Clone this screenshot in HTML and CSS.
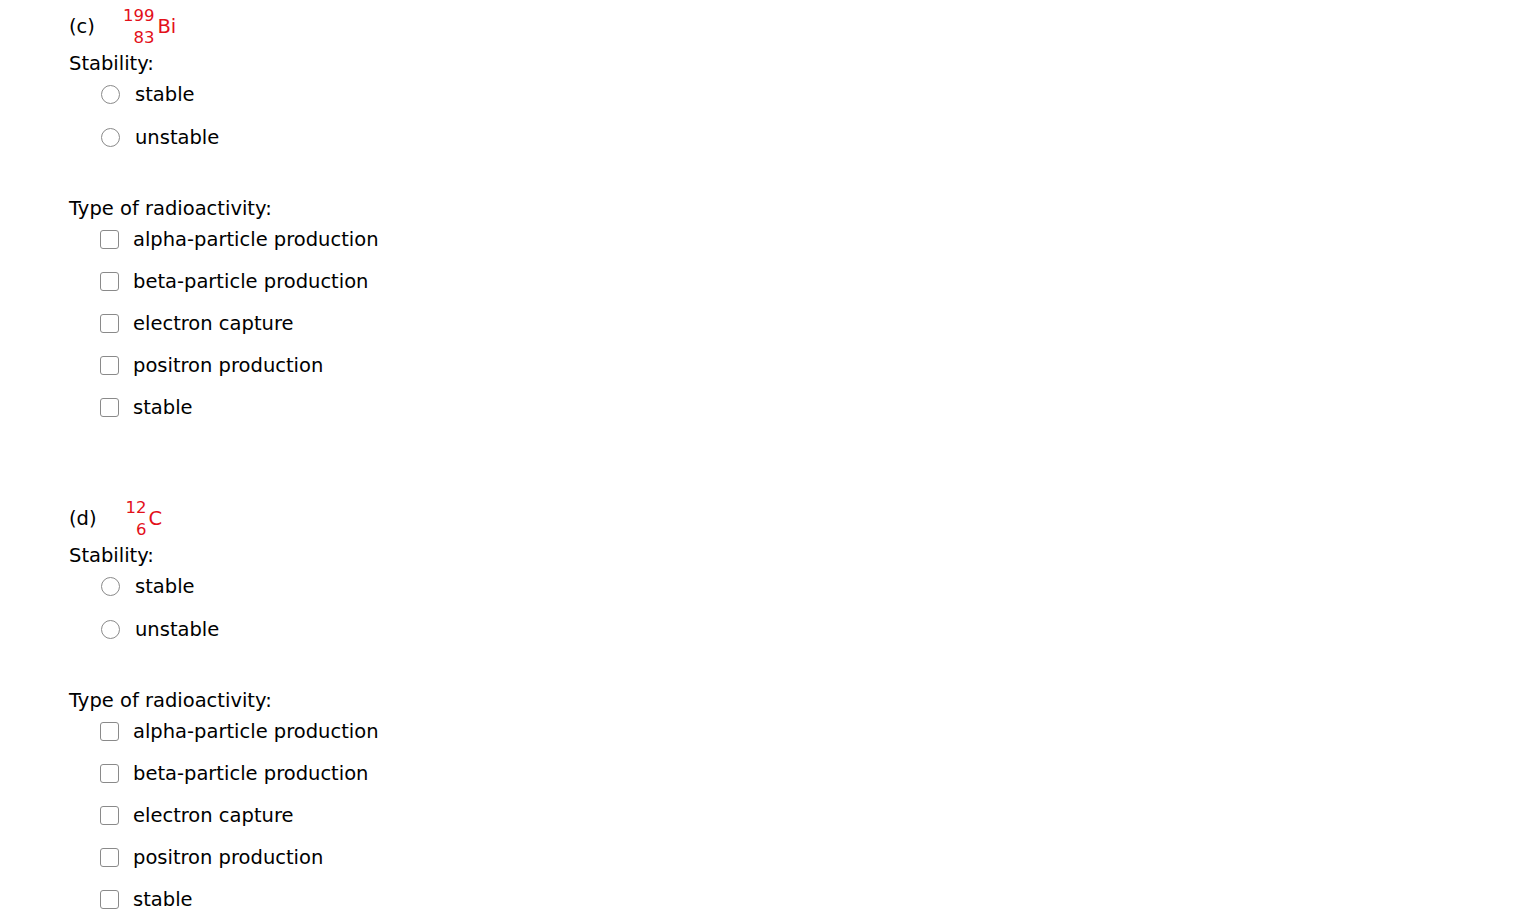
FILE: index.html
```html
<!DOCTYPE html>
<html>
<head>
<meta charset="utf-8">
<link rel="stylesheet" href="styles.css">
</head>
<body>
<div class="page">
  <section class="part">
    <div class="row heading"><span class="label">(c)</span><span class="iso"><span class="nums"><span class="mass">199</span><span class="atomic">83</span></span><span class="sym">Bi</span></span></div>
    <div class="row">Stability:</div>
    <label class="row opt radio-row"><span class="radio"></span><span>stable</span></label>
    <label class="row opt radio-row last"><span class="radio"></span><span>unstable</span></label>
    <div class="row">Type of radioactivity:</div>
    <label class="row opt check-row"><span class="check"></span><span>alpha-particle production</span></label>
    <label class="row opt check-row"><span class="check"></span><span>beta-particle production</span></label>
    <label class="row opt check-row"><span class="check"></span><span>electron capture</span></label>
    <label class="row opt check-row"><span class="check"></span><span>positron production</span></label>
    <label class="row opt check-row final"><span class="check"></span><span>stable</span></label>
  </section>
  <section class="part">
    <div class="row heading"><span class="label">(d)</span><span class="iso iso-d"><span class="nums"><span class="mass">12</span><span class="atomic">6</span></span><span class="sym">C</span></span></div>
    <div class="row">Stability:</div>
    <label class="row opt radio-row"><span class="radio"></span><span>stable</span></label>
    <label class="row opt radio-row last"><span class="radio"></span><span>unstable</span></label>
    <div class="row">Type of radioactivity:</div>
    <label class="row opt check-row"><span class="check"></span><span>alpha-particle production</span></label>
    <label class="row opt check-row"><span class="check"></span><span>beta-particle production</span></label>
    <label class="row opt check-row"><span class="check"></span><span>electron capture</span></label>
    <label class="row opt check-row"><span class="check"></span><span>positron production</span></label>
    <label class="row opt check-row final"><span class="check"></span><span>stable</span></label>
  </section>
</div>
</body>
</html>
```
FILE: styles.css
```css
html, body {
  margin: 0;
  padding: 0;
  background: #fff;
}
body {
  font-family: "DejaVu Sans", Verdana, sans-serif;
  font-size: 19.5px;
  color: #000;
}
.page {
  padding: 11px 0 0 69px;
}
.part {
  display: flex;
  flex-direction: column;
}
.row {
  height: 31px;
  display: flex;
  align-items: center;
  white-space: nowrap;
}
.heading {
  margin-bottom: 6px;
}
.iso {
  display: inline-flex;
  align-items: center;
  color: #e3101a;
  margin-left: 28px;
}
.iso-d {
  margin-left: 29px;
}
.nums {
  display: inline-flex;
  flex-direction: column;
  align-items: flex-end;
  font-size: 16.5px;
  line-height: 22px;
  margin-right: 3px;
}
.iso-d .nums {
  margin-right: 2px;
}
.sym {
  font-size: 19.5px;
}
.opt {
  margin-left: 31px;
}
.radio-row {
  margin-bottom: 12px;
}
.radio-row.last {
  margin-bottom: 40px;
}
.check-row {
  margin-bottom: 11px;
}
.check-row.final {
  margin-bottom: 80px;
}
.radio {
  width: 17px;
  height: 17px;
  border: 1px solid #8a8a8a;
  border-radius: 50%;
  margin-left: 1px;
  margin-right: 15px;
  flex: none;
}
.check {
  width: 17px;
  height: 17px;
  border: 1px solid #8a8a8a;
  border-radius: 3px;
  margin-right: 14px;
  flex: none;
}
```
